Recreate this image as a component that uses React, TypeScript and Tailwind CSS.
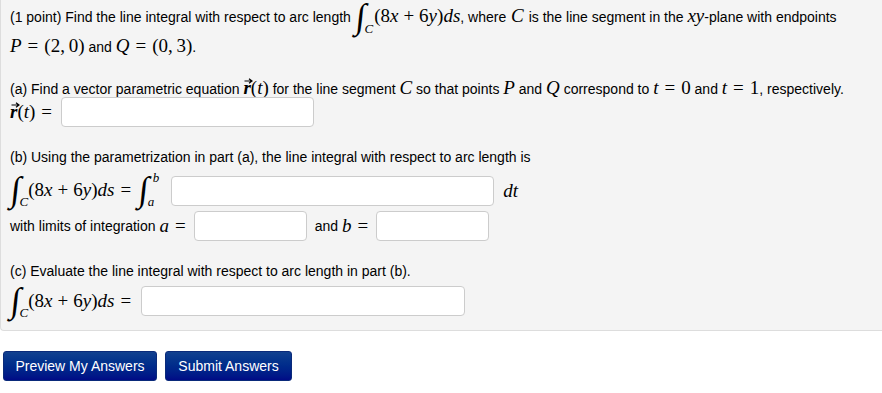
import React from "react";

const SERIF = "font-['Liberation_Serif','Times_New_Roman',serif]";

const V = ({ children }: { children: React.ReactNode }) => <span className="italic">{children}</span>;

const M = ({ children, className = "" }: { children: React.ReactNode; className?: string }) => (
  <span className={`${SERIF} text-[19px] leading-[18px] text-black whitespace-nowrap ${className}`}>{children}</span>
);

const Plus = () => <span className="mx-[5px]">+</span>;
const Eq = () => <span className="mx-[6px]">=</span>;

const Integral = ({ sub, sup }: { sub: string; sup?: string }) => (
  <span className={`inline-flex items-stretch align-middle ${SERIF} leading-none h-[38px]`}>
    <span className="text-[35px] leading-[38px] italic inline-block -skew-x-6 px-[1px]">∫</span>
    <span className="flex flex-col justify-between italic text-[13px] leading-none pb-[1px]">
      <span className="pl-[3px] h-[12px]">{sup ?? ""}</span>
      <span className="-ml-[2px]">{sub}</span>
    </span>
  </span>
);

const Rvec = () => (
  <span className="relative inline-block italic font-bold">
    r
    <svg className="absolute left-[1px] top-[-1px]" width="9" height="6" viewBox="0 0 9 6">
      <path d="M0.5 3 H7.5 M5 0.8 L8 3 L5 5.2" stroke="black" strokeWidth="1.2" fill="none" />
    </svg>
  </span>
);

const Input = ({ w }: { w: string }) => (
  <span className={`${w} h-[30px] bg-white border border-[#cccccc] rounded-[4px] shrink-0 inline-block`} />
);

const Expr = () => (
  <M>
    (8<V>x</V>
    <Plus />6<V>y</V>)<V>ds</V>
  </M>
);

export default function App() {
  return (
    <div className="w-[882px] h-[393px] bg-white font-['Liberation_Sans',Arial,sans-serif] text-[14px] text-black overflow-hidden">
      <div className="bg-[#f4f4f4] border-b border-l border-[#dddddd] rounded-bl-[4px] pl-[9px] h-[331px]">
        {/* line 1 */}
        <div className="flex items-center h-[34px] whitespace-nowrap">
          <span>(1 point) Find the line integral with respect to arc length</span>
          <span className="ml-[4px] flex items-center">
            <Integral sub="C" />
            <span className="ml-[1px]"><Expr /></span>
          </span>
          <span className="self-center">
            , where <M className="mx-[1px]"><V>C</V></M> is the line segment in the <M><V>xy</V></M>-plane with endpoints
          </span>
        </div>
        {/* line 2 */}
        <div className="h-[26px] leading-[26px] whitespace-nowrap">
          <M><V>P</V><Eq />(2,&thinsp;0)</M> and <M><V>Q</V><Eq />(0,&thinsp;3)</M>.
        </div>
        {/* (a) */}
        <div className="h-[18px] leading-[18px] mt-[19px] whitespace-nowrap">
          (a) Find a vector parametric equation <M><Rvec />(<V>t</V>)</M> for the line segment <M><V>C</V></M> so that points{" "}
          <M><V>P</V></M> and <M><V>Q</V></M> correspond to <M><V>t</V><Eq />0</M> and <M><V>t</V><Eq />1</M>, respectively.
        </div>
        <div className="flex items-center h-[30px]">
          <M><Rvec />(<V>t</V>)<Eq /></M>
          <span className="ml-[3px] flex"><Input w="w-[253px]" /></span>
        </div>
        {/* (b) */}
        <div className="h-[18px] leading-[18px] mt-[21px] whitespace-nowrap">
          (b) Using the parametrization in part (a), the line integral with respect to arc length is
        </div>
        <div className="flex items-center h-[43px] mt-[2px]">
          <Integral sub="C" />
          <Expr />
          <M><Eq /></M>
          <span className="ml-[1px]"><Integral sub="a" sup="b" /></span>
          <span className="ml-[12px] mt-[2px] flex"><Input w="w-[323px]" /></span>
          <M className="ml-[9px] mt-[2px]"><V>dt</V></M>
        </div>
        <div className="flex items-center h-[30px] whitespace-nowrap">
          <span>with limits of integration</span>
          <M className="ml-[4px] mr-[2px]"><V>a</V><Eq /></M>
          <Input w="w-[113px]" />
          <span className="ml-[8px]">and</span>
          <M className="ml-[4px] mr-[2px]"><V>b</V><Eq /></M>
          <Input w="w-[113px]" />
        </div>
        {/* (c) */}
        <div className="h-[18px] leading-[18px] mt-[21px] whitespace-nowrap">
          (c) Evaluate the line integral with respect to arc length in part (b).
        </div>
        <div className="flex items-center h-[41px]">
          <Integral sub="C" />
          <Expr />
          <M><Eq /></M>
          <span className="ml-[4px] flex"><Input w="w-[324px]" /></span>
        </div>
      </div>
      <div className="flex gap-[8px] pl-[3px] pt-[20px]">
        <button className="h-[30px] w-[154px] rounded-[3px] text-white text-[14px] bg-gradient-to-b from-[#11408f] to-[#000a86] border border-[#0a2a7a]">
          Preview My Answers
        </button>
        <button className="h-[30px] w-[127px] rounded-[3px] text-white text-[14px] bg-gradient-to-b from-[#11408f] to-[#000a86] border border-[#0a2a7a]">
          Submit Answers
        </button>
      </div>
    </div>
  );
}
